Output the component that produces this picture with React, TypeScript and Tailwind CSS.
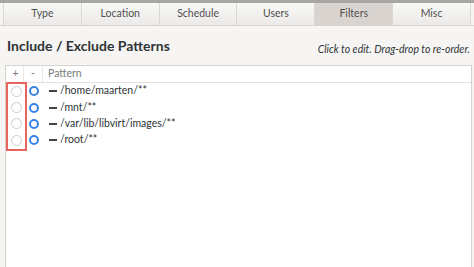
import React from "react";

const tabs = ["Type", "Location", "Schedule", "Users", "Filters", "Misc"];
const patterns = ["/home/maarten/**", "/mnt/**", "/var/lib/libvirt/images/**", "/root/**"];

export default function App() {
  return (
    <div
      className="w-[474px] h-[267px] bg-[#f6f5f4] overflow-hidden flex flex-col"
      style={{ fontFamily: 'Lato, "Noto Sans", sans-serif' }}
    >
      <div className="h-[3px] bg-[#a8a6a3]" />
      <div className="flex px-[3px] h-[23px] border-b border-[#d8d4d0]">
        {tabs.map((t) => (
          <div
            key={t}
            className={
              "flex-1 flex items-center justify-center text-[10.5px] text-[#505050] border-r border-l border-[#dcd8d4] -ml-px first:ml-0 " +
              (t === "Filters" ? "bg-[#d9d4d0]" : "bg-gradient-to-b from-[#f8f8f7] to-[#eceae8]")
            }
          >
            {t}
          </div>
        ))}
      </div>
      <div className="h-[39px] flex items-start justify-between px-[7px]">
        <div className="pt-[13px] text-[14px] font-bold text-[#2e3436] leading-none">Include / Exclude Patterns</div>
        <div className="pt-[18px] text-[10.5px] italic text-[#2e3436] leading-none mr-[-3px]">
          Click to edit. Drag-drop to re-order.
        </div>
      </div>
      <div className="ml-[5px] mr-[2px] flex-1 bg-white border border-[#d6d2ce] border-b-0 flex flex-col">
        <div className="flex h-[17px] items-center text-[10.5px] text-[#7a7a7a] border-b border-[#e4e2df]">
          <div className="w-[18px] h-full flex items-center justify-center border-r border-[#ebe9e6] pl-[2px]">+</div>
          <div className="w-[19px] h-full flex items-center justify-center border-r border-[#ebe9e6]">-</div>
          <div className="pl-[5px]">Pattern</div>
        </div>
        <div className="relative flex flex-col">
          <div className="absolute left-[0px] top-[-1px] w-[21px] h-[69px] border-2 border-[#e8645f]" />
          {patterns.map((p) => (
            <div key={p} className="flex items-center h-[16.4px]">
              <div className="w-[18px] flex items-center justify-center pl-[2px]">
                <div className="w-[11px] h-[11px] rounded-full border border-[#cfcccb] bg-white" />
              </div>
              <div className="w-[19px] flex items-center justify-center">
                <div className="w-[10px] h-[10px] rounded-full border-[2.5px] border-[#3584e4]" />
              </div>
              <div className="ml-[6px] w-[8px] h-[2px] bg-[#3d4446]" />
              <div className="ml-[3px] text-[10.5px] text-[#2e3436]">{p}</div>
            </div>
          ))}
        </div>
      </div>
    </div>
  );
}
